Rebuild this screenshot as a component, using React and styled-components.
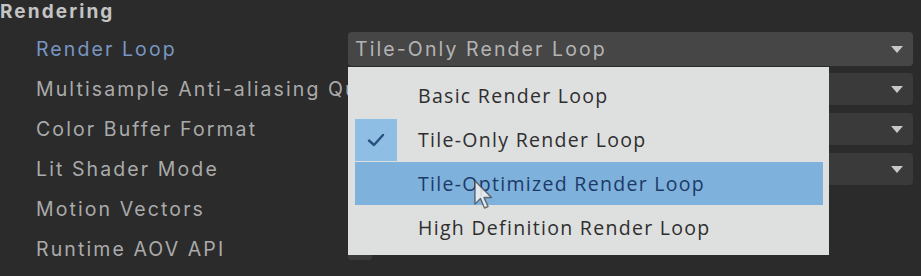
import styled, { createGlobalStyle } from "styled-components";

const GlobalStyle = createGlobalStyle`
  html, body {
    margin: 0;
    padding: 0;
    background: #2b2b2b;
    overflow: hidden;
  }
`;

const rows = [
  { label: "Render Loop", value: "Tile-Only Render Loop", kind: "select", active: true },
  { label: "Multisample Anti-aliasing Quality", kind: "select" },
  { label: "Color Buffer Format", kind: "select" },
  { label: "Lit Shader Mode", kind: "select" },
  { label: "Motion Vectors", kind: "toggle" },
  { label: "Runtime AOV API", kind: "toggle" },
];

const options = [
  { name: "Basic Render Loop" },
  { name: "Tile-Only Render Loop", checked: true },
  { name: "Tile-Optimized Render Loop", hover: true },
  { name: "High Definition Render Loop" },
];

const App = () => {
  return (
    <Panel>
      <GlobalStyle />
      <Header>Rendering</Header>
      <Rows>
        {rows.map((r, i) => (
          <Row key={i}>
            <Label active={r.active}>{r.label}</Label>
            {r.kind === "select" ? (
              <Field active={r.active}>
                <FieldText>{r.value || ""}</FieldText>
                <Arrow />
              </Field>
            ) : (
              <ToggleCell>
                <Toggle />
              </ToggleCell>
            )}
          </Row>
        ))}
      </Rows>
      <Popup>
        {options.map((o, i) => (
          <Option key={i} hover={o.hover}>
            <CheckBox checked={o.checked}>
              {o.checked && (
                <svg width="20" height="16" viewBox="0 0 20 16">
                  <path d="M3 8.5 L8 13 L17 3" fill="none" stroke="#27507f" strokeWidth="2.4" strokeLinecap="round" strokeLinejoin="round" />
                </svg>
              )}
            </CheckBox>
            <OptionText hover={o.hover}>{o.name}</OptionText>
          </Option>
        ))}
      </Popup>
      <Cursor>
        <svg width="22" height="32" viewBox="0 0 22 32">
          <path d="M1 1 L1 24 L6.5 18.5 L10.5 28 L14 26.5 L10 17.5 L17.5 17.5 Z" fill="#f2f2f2" fillOpacity="0.85" stroke="#3a3a3a" strokeOpacity="0.7" strokeWidth="1.4" strokeLinejoin="round" />
        </svg>
      </Cursor>
    </Panel>
  );
};

export default App;

const Panel = styled.div`
  position: relative;
  width: 921px;
  height: 276px;
  background: #2b2b2b;
  font-family: Inter, "Noto Sans", sans-serif;
  overflow: hidden;
`;

const Header = styled.div`
  height: 29px;
  line-height: 24px;
  font-size: 19px;
  font-weight: 700;
  letter-spacing: 2.1px;
  color: #c4c4c4;
`;

const Rows = styled.div`
  display: flex;
  flex-direction: column;
`;

const Row = styled.div`
  display: grid;
  grid-template-columns: 348px 1fr;
  align-items: center;
  height: 40px;
  padding-right: 8px;
`;

const Label = styled.div`
  padding-left: 36px;
  padding-right: 6px;
  font-size: 19.5px;
  letter-spacing: 2.1px;
  color: ${(p) => (p.active ? "#7896c2" : "#aaaaaa")};
  white-space: nowrap;
  overflow: hidden;
`;

const Field = styled.div`
  display: flex;
  align-items: center;
  justify-content: space-between;
  height: ${(p) => (p.active ? "34px" : "32px")};
  padding: 0 10px 0 7px;
  border-radius: 4px;
  background: ${(p) => (p.active ? "#464646" : "#3a3a3a")};
`;

const FieldText = styled.span`
  font-size: 19.5px;
  letter-spacing: 2.1px;
  color: #b4b4b4;
`;

const Arrow = styled.span`
  width: 0;
  height: 0;
  border-left: 6px solid transparent;
  border-right: 6px solid transparent;
  border-top: 7px solid #c8c8c8;
`;

const ToggleCell = styled.div`
  display: flex;
  align-items: center;
`;

const Toggle = styled.div`
  width: 24px;
  height: 22px;
  border-radius: 3px;
  background: #3a3a3a;
`;

const Popup = styled.div`
  position: absolute;
  left: 348px;
  top: 67px;
  width: 481px;
  height: 188px;
  box-sizing: border-box;
  padding: 7px 6px 6px 7px;
  background: #dedfdf;
  display: flex;
  flex-direction: column;
  font-family: "Open Sans", "Noto Sans", sans-serif;
`;

const Option = styled.div`
  display: flex;
  align-items: center;
  height: 44px;
  background: ${(p) => (p.hover ? "#7fb1dd" : "transparent")};
`;

const CheckBox = styled.div`
  width: 42px;
  height: 42px;
  margin-right: 21px;
  display: flex;
  align-items: center;
  justify-content: center;
  background: ${(p) => (p.checked ? "#8fbee5" : "transparent")};
`;

const OptionText = styled.span`
  font-size: 19.5px;
  font-weight: 500;
  letter-spacing: 1.3px;
  color: ${(p) => (p.hover ? "#1d3a66" : "#2e2e2e")};
`;

const Cursor = styled.div`
  position: absolute;
  left: 474px;
  top: 180px;
`;
